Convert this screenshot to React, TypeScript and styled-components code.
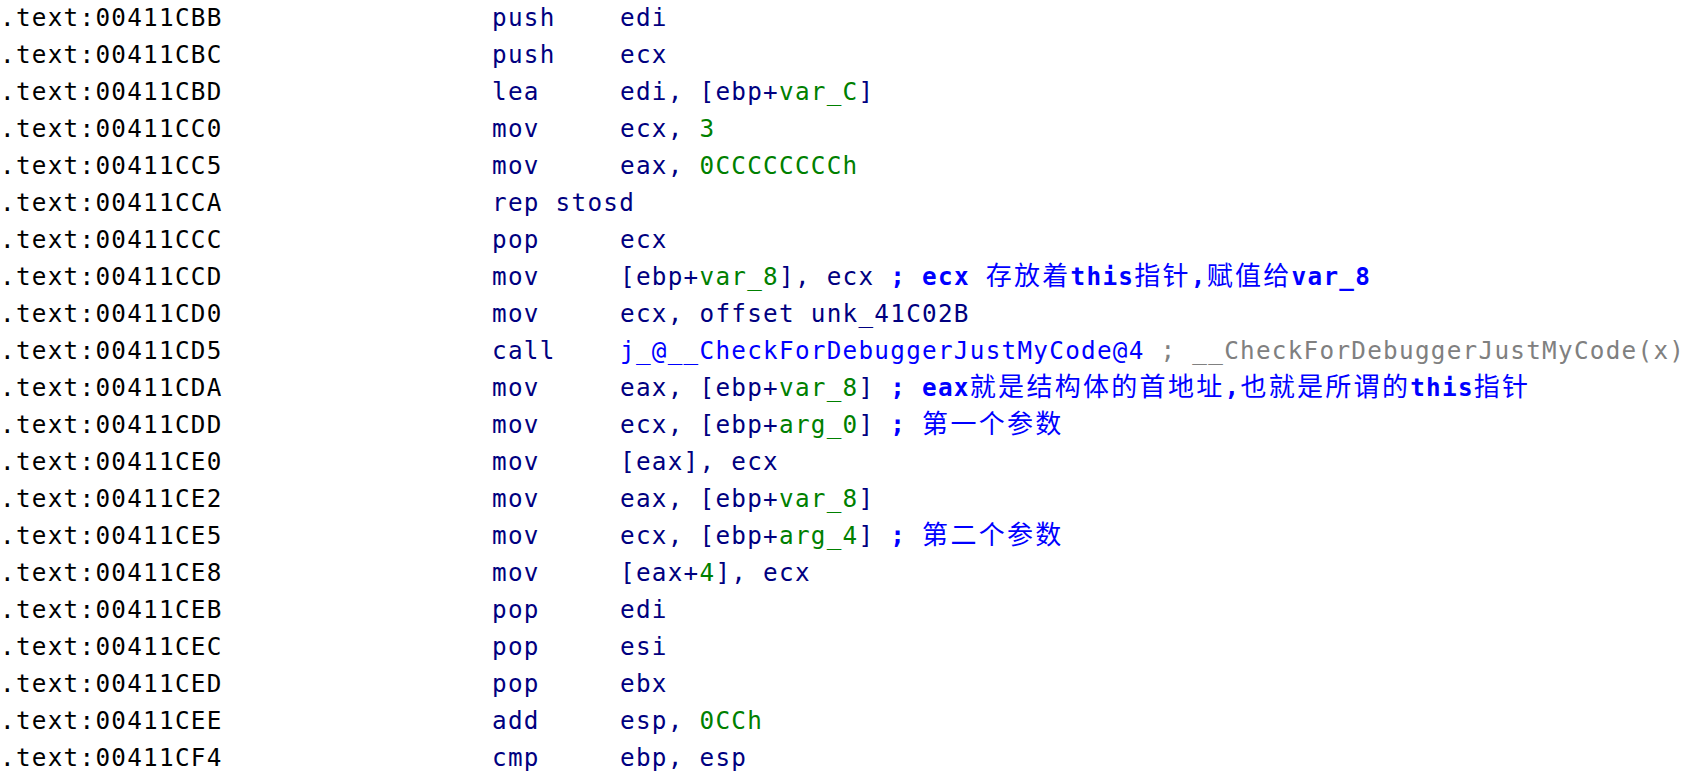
import React from "react";
import styled, { createGlobalStyle } from "styled-components";

const GlobalStyle = createGlobalStyle`
  html, body {
    margin: 0;
    padding: 0;
    background: #ffffff;
    overflow: hidden;
  }
  body {
    font-family: "DejaVu Sans Mono", "Liberation Mono", monospace;
  }
`;

type Kind = "navy" | "green" | "blue" | "comment" | "gray";

type Seg = [Kind, string];

interface Line {
  addr: string;
  mnem: string;
  ops?: Seg[];
}

const COLORS: Record<Kind, string> = {
  navy: "#000080",
  green: "#008000",
  blue: "#0000ff",
  comment: "#0000ff",
  gray: "#808080",
};

const Listing = styled.div`
  display: flex;
  flex-direction: column;
  width: 1700px;
  padding-top: 1px;
`;

const Row = styled.div`
  display: flex;
  align-items: flex-start;
  height: 37px;
  box-sizing: border-box;
  padding-bottom: 4px;
  line-height: 33px;
  font-size: 24.3px;
  letter-spacing: 1.27px;
  white-space: pre;
`;

const Address = styled.span`
  flex: none;
  width: 492px;
  color: #000000;
`;

const Mnemonic = styled.span`
  flex: none;
  width: 128px;
  color: #000080;
`;

const Operands = styled.span`
  flex: none;
  color: #000080;
`;

const Part = styled.span<{ $kind: Kind }>`
  color: ${(p) => COLORS[p.$kind]};
  font-weight: ${(p) => (p.$kind === "comment" ? 700 : 400)};
`;

const Cjk = styled.span<{ $kind: Kind }>`
  font-family: "Noto Sans CJK SC", sans-serif;
  font-size: 26px;
  letter-spacing: 2.3px;
  line-height: 0;
  font-weight: 400;
  color: ${(p) => COLORS[p.$kind]};
`;

const CJK_RE = /([\u3000-\u9fff\uff00-\uffef]+)/;

const lines: Line[] = [
  { addr: ".text:00411CBB", mnem: "push", ops: [["navy", "edi"]] },
  { addr: ".text:00411CBC", mnem: "push", ops: [["navy", "ecx"]] },
  {
    addr: ".text:00411CBD",
    mnem: "lea",
    ops: [["navy", "edi, [ebp+"], ["green", "var_C"], ["navy", "]"]],
  },
  { addr: ".text:00411CC0", mnem: "mov", ops: [["navy", "ecx, "], ["green", "3"]] },
  { addr: ".text:00411CC5", mnem: "mov", ops: [["navy", "eax, "], ["green", "0CCCCCCCCh"]] },
  { addr: ".text:00411CCA", mnem: "rep stosd" },
  { addr: ".text:00411CCC", mnem: "pop", ops: [["navy", "ecx"]] },
  {
    addr: ".text:00411CCD",
    mnem: "mov",
    ops: [
      ["navy", "[ebp+"],
      ["green", "var_8"],
      ["navy", "], ecx "],
      ["comment", "; ecx 存放着this指针,赋值给var_8"],
    ],
  },
  { addr: ".text:00411CD0", mnem: "mov", ops: [["navy", "ecx, offset unk_41C02B"]] },
  {
    addr: ".text:00411CD5",
    mnem: "call",
    ops: [
      ["blue", "j_@__CheckForDebuggerJustMyCode@4"],
      ["gray", " ; __CheckForDebuggerJustMyCode(x)"],
    ],
  },
  {
    addr: ".text:00411CDA",
    mnem: "mov",
    ops: [
      ["navy", "eax, [ebp+"],
      ["green", "var_8"],
      ["navy", "] "],
      ["comment", "; eax就是结构体的首地址,也就是所谓的this指针"],
    ],
  },
  {
    addr: ".text:00411CDD",
    mnem: "mov",
    ops: [
      ["navy", "ecx, [ebp+"],
      ["green", "arg_0"],
      ["navy", "] "],
      ["comment", "; 第一个参数"],
    ],
  },
  { addr: ".text:00411CE0", mnem: "mov", ops: [["navy", "[eax], ecx"]] },
  {
    addr: ".text:00411CE2",
    mnem: "mov",
    ops: [["navy", "eax, [ebp+"], ["green", "var_8"], ["navy", "]"]],
  },
  {
    addr: ".text:00411CE5",
    mnem: "mov",
    ops: [
      ["navy", "ecx, [ebp+"],
      ["green", "arg_4"],
      ["navy", "] "],
      ["comment", "; 第二个参数"],
    ],
  },
  {
    addr: ".text:00411CE8",
    mnem: "mov",
    ops: [["navy", "[eax+"], ["green", "4"], ["navy", "], ecx"]],
  },
  { addr: ".text:00411CEB", mnem: "pop", ops: [["navy", "edi"]] },
  { addr: ".text:00411CEC", mnem: "pop", ops: [["navy", "esi"]] },
  { addr: ".text:00411CED", mnem: "pop", ops: [["navy", "ebx"]] },
  { addr: ".text:00411CEE", mnem: "add", ops: [["navy", "esp, "], ["green", "0CCh"]] },
  { addr: ".text:00411CF4", mnem: "cmp", ops: [["navy", "ebp, esp"]] },
];

function renderSeg(seg: Seg, key: number) {
  const [kind, text] = seg;
  const pieces = text.split(CJK_RE).filter((s) => s.length > 0);
  return (
    <React.Fragment key={key}>
      {pieces.map((p, i) =>
        CJK_RE.test(p) ? (
          <Cjk key={i} $kind={kind}>
            {p}
          </Cjk>
        ) : (
          <Part key={i} $kind={kind}>
            {p}
          </Part>
        )
      )}
    </React.Fragment>
  );
}

export default function App() {
  return (
    <>
      <GlobalStyle />
      <Listing>
        {lines.map((l) => (
          <Row key={l.addr}>
            <Address>{l.addr}</Address>
            <Mnemonic>{l.mnem}</Mnemonic>
            {l.ops && <Operands>{l.ops.map(renderSeg)}</Operands>}
          </Row>
        ))}
      </Listing>
    </>
  );
}
